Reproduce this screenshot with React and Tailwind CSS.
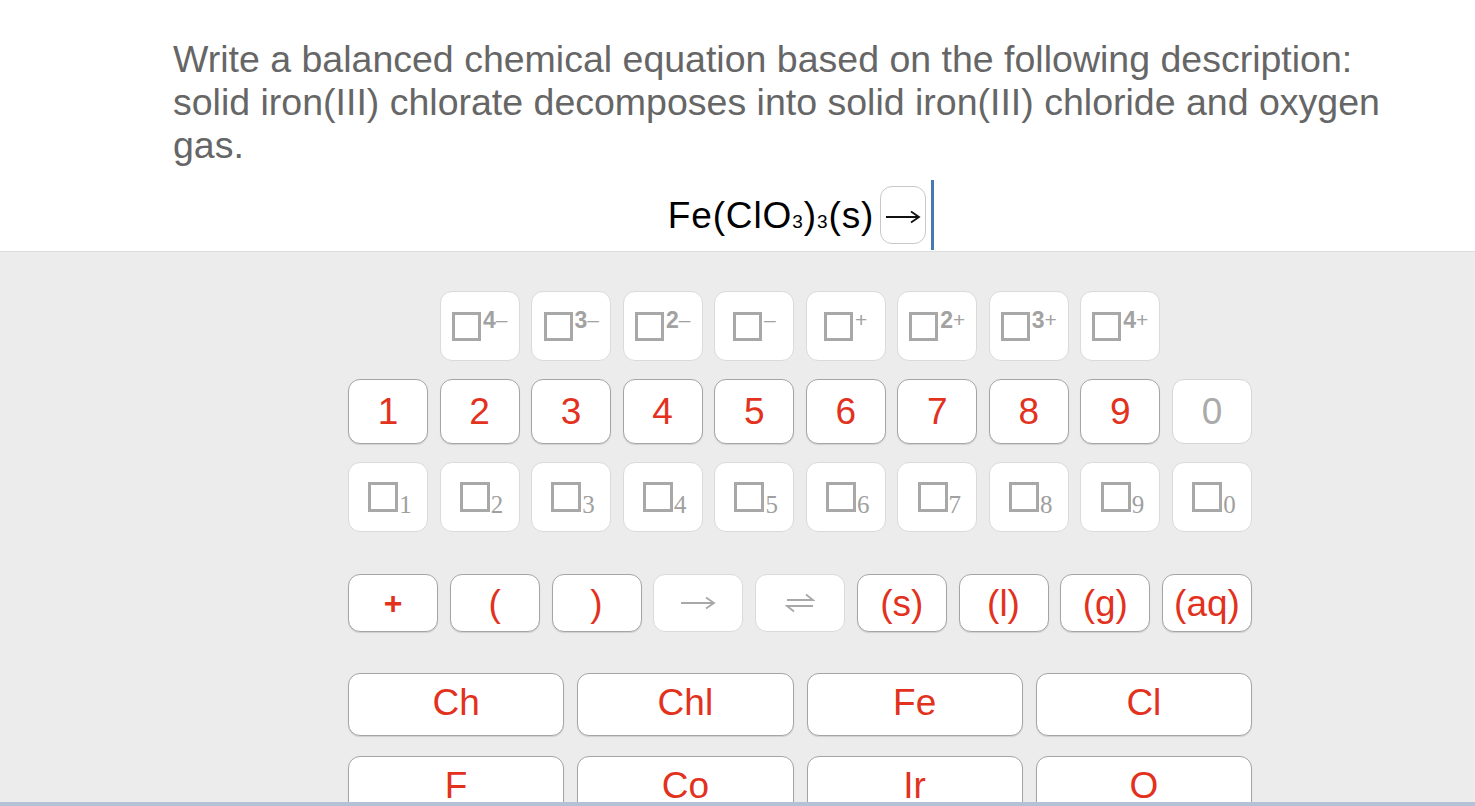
import React from "react";

const RED = "text-[#e2321e]";

function Arrow({ w = 36, color = "currentColor" }) {
  return (
    <svg width={w} height="14" viewBox={`0 0 ${w} 14`} fill="none" stroke={color} strokeWidth="2">
      <path d={`M1 7H${w - 2}`} />
      <path d={`M${w - 10} 1.5L${w - 2} 7L${w - 10} 12.5`} strokeWidth="1.8" />
    </svg>
  );
}

function Equil() {
  return (
    <svg width="30" height="20" viewBox="0 0 30 20" fill="none" stroke="#a8a8a8" strokeWidth="1.8">
      <path d="M2 7H28L21 1.5" />
      <path d="M28 13H2L9 18.5" />
    </svg>
  );
}

function ChargeKey({ num, sign }) {
  return (
    <button className="w-[80px] h-[70px] rounded-[12px] bg-white border border-[#dadada] flex items-center justify-center">
      <span className="flex items-start">
        <span className="w-[29px] h-[29px] border-[3px] border-[#a8a8a8]" />
        <span className="flex items-center -mt-[2px] ml-[2px] text-[#a2a2a2]">
          {num && <span className="text-[23px] font-bold leading-[20px]">{num}</span>}
          <span className="text-[21px] leading-[20px] font-light">{sign}</span>
        </span>
      </span>
    </button>
  );
}

function DigitKey({ d, muted }) {
  return (
    <button
      className={`w-[80px] h-[65px] rounded-[12px] bg-white flex items-center justify-center text-[37px] leading-none ${
        muted
          ? "border border-[#d6d6d6] text-[#aaaaaa]"
          : `border border-[#a5a5a5] shadow-[0_1px_1px_rgba(0,0,0,0.12)] ${RED}`
      }`}
    >
      {d}
    </button>
  );
}

function SubKey({ d }) {
  return (
    <button className="w-[80px] h-[70px] rounded-[12px] bg-white border border-[#dadada] flex items-center justify-center">
      <span className="flex items-end pl-1">
        <span className="w-[30px] h-[30px] border-[3px] border-[#a8a8a8]" />
        <span className="text-[25px] leading-[20px] text-[#a0a0a0] ml-[1px] mb-[-3px] font-['Liberation_Serif','DejaVu_Serif',serif]">
          {d}
        </span>
      </span>
    </button>
  );
}

function SymKey({ label, muted }) {
  return (
    <button
      className={`w-[90px] h-[58px] rounded-[12px] bg-white flex items-center justify-center text-[37px] leading-none ${
        muted
          ? "border border-[#dadada] text-[#a8a8a8]"
          : `border border-[#a5a5a5] shadow-[0_1px_1px_rgba(0,0,0,0.12)] ${RED}`
      }`}
    >
      {label}
    </button>
  );
}

function ElemKey({ label }) {
  return (
    <button
      className={`h-[63px] rounded-[12px] bg-white border border-[#a5a5a5] shadow-[0_1px_1px_rgba(0,0,0,0.12)] flex items-center justify-center pb-[4px] text-[37px] leading-none ${RED}`}
    >
      {label}
    </button>
  );
}

export default function App() {
  const charges = [
    ["4", "–"],
    ["3", "–"],
    ["2", "–"],
    ["", "–"],
    ["", "+"],
    ["2", "+"],
    ["3", "+"],
    ["4", "+"],
  ];
  const digits = ["1", "2", "3", "4", "5", "6", "7", "8", "9"];
  const subs = ["1", "2", "3", "4", "5", "6", "7", "8", "9", "0"];

  return (
    <div className="w-[1475px] h-[806px] overflow-hidden bg-white flex flex-col font-['Liberation_Sans',Arial,sans-serif]">
      {/* Question */}
      <div className="h-[251px] shrink-0 pt-[38px]">
        <p className="pl-[173px] pr-[60px] text-[37.5px] leading-[43px] text-[#666666]">
          Write a balanced chemical equation based on the following description: solid iron(III) chlorate
          decomposes into solid iron(III) chloride and oxygen gas.
        </p>
        <div className="ml-[348px] w-[904px] mt-[13px] h-[70px] flex justify-center items-center">
          <div className="flex items-center text-black pl-[2px]">
            <span className="text-[37px] leading-none tracking-[0.9px]">
              Fe(ClO<span className="text-[19px]">3</span>)<span className="text-[19px]">3</span>(s)
            </span>
            <span className="ml-[6px] w-[46px] h-[58px] rounded-[12px] border border-[#c8c8c8] flex items-center justify-center pt-[4px]">
              <Arrow w={36} color="#111" />
            </span>
            <span className="ml-[5px] w-[3px] h-[70px] bg-[#4a78b0]" />
          </div>
        </div>
      </div>

      {/* Keyboard */}
      <div className="flex-1 bg-[#ececec] border-t border-[#dcdcdc] border-b-4 border-b-[#b5c1d6] overflow-hidden">
        <div className="ml-[348px] w-[904px] pt-[39px] flex flex-col">
          <div className="flex justify-center gap-[11.5px]">
            {charges.map(([n, s], i) => (
              <ChargeKey key={i} num={n} sign={s} />
            ))}
          </div>
          <div className="mt-[18px] flex justify-between">
            {digits.map((d) => (
              <DigitKey key={d} d={d} />
            ))}
            <DigitKey d="0" muted />
          </div>
          <div className="mt-[18px] flex justify-between">
            {subs.map((d) => (
              <SubKey key={d} d={d} />
            ))}
          </div>
          <div className="mt-[42px] flex justify-between">
            <SymKey label={<span className="text-[32px] font-bold">+</span>} />
            <SymKey label="(" />
            <SymKey label=")" />
            <SymKey label={<Arrow w={36} color="#a8a8a8" />} muted />
            <SymKey label={<Equil />} muted />
            <SymKey label="(s)" />
            <SymKey label="(l)" />
            <SymKey label="(g)" />
            <SymKey label="(aq)" />
          </div>
          <div className="mt-[41px] grid grid-cols-4 gap-x-[13px] gap-y-[20px]">
            {["Ch", "Chl", "Fe", "Cl", "F", "Co", "Ir", "O"].map((e) => (
              <ElemKey key={e} label={e} />
            ))}
          </div>
        </div>
      </div>
    </div>
  );
}
